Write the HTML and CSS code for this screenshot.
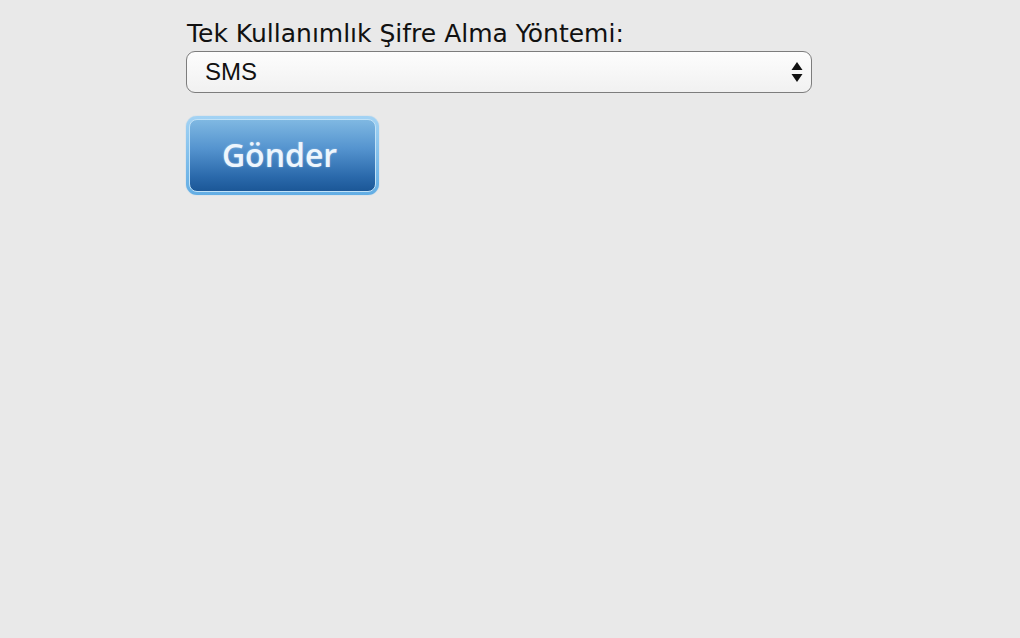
FILE: index.html
```html
<!DOCTYPE html>
<html>
<head>
<meta charset="utf-8">
<link rel="stylesheet" href="styles.css">
</head>
<body>
<div class="form">
  <label class="label">Tek Kullanımlık Şifre Alma Yöntemi:</label>
  <div class="select">
    <span class="value">SMS</span>
    <svg class="arrows" width="12" height="22" viewBox="0 0 12 22"><path d="M6 1 L11.5 9 L0.5 9 Z M6 21 L11.5 13 L0.5 13 Z" fill="#111"/></svg>
  </div>
  <div class="btn-outer"><div class="btn">Gönder</div></div>
</div>
</body>
</html>
```
FILE: styles.css
```css
html, body { margin: 0; padding: 0; }
body { background: #e9e9e9; width: 1020px; height: 638px; overflow: hidden; }
.form { padding: 17px 0 0 186px; display: flex; flex-direction: column; align-items: flex-start; }
.label { font-family: "DejaVu Sans", sans-serif; font-size: 25px; color: #111; line-height: 34px; padding-left: 1px; letter-spacing: 0; }
.select { box-sizing: border-box; width: 626px; height: 42px; border: 1.5px solid #7d7d7d; border-radius: 9px; background: linear-gradient(#fdfdfd, #f1f1f1); display: flex; align-items: center; justify-content: space-between; padding: 0 8px 0 18px; }
.value { font-family: "Liberation Sans", Arial, sans-serif; font-size: 24px; color: #111; }
.btn-outer { margin-top: 23px; width: 193px; height: 79px; box-sizing: border-box; border-radius: 11px; background: linear-gradient(#a3d3f4, #62ade4); padding: 3px; box-shadow: 0 0 1px #7fbbe6; }
.btn { box-sizing: border-box; width: 100%; height: 100%; border-radius: 8px; border: 1.5px solid #c2e2f7; background: linear-gradient(#7fb8e2 0%, #5594cf 40%, #2a69ab 80%, #1b5797 100%); color: #eef6fd; font-family: "Open Sans", sans-serif; font-size: 32px; font-weight: 600; display: flex; align-items: center; justify-content: center; padding: 0 6px 2px 0; text-shadow: 0 0 2px rgba(255,255,255,0.4); }
```
